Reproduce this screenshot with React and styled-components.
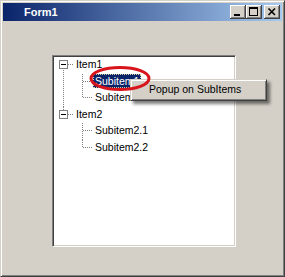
import React from "react";
import styled, { createGlobalStyle } from "styled-components";

const Global = createGlobalStyle`
  html, body { margin: 0; padding: 0; background: #d4d0c8; }
  body { width: 285px; height: 277px; overflow: hidden; }
`;

const Window = styled.div`
  position: relative;
  width: 285px;
  height: 277px;
  box-sizing: border-box;
  background: #d4d0c8;
  border: 1px solid;
  border-color: #d4d0c8 #404040 #404040 #d4d0c8;
  box-shadow: inset 1px 1px #ffffff, inset -1px -1px #808080;
  padding: 2px;
  display: flex;
  flex-direction: column;
  font-family: "Liberation Sans", Arial, sans-serif;
`;

const TitleBar = styled.div`
  height: 18px;
  display: flex;
  align-items: center;
  padding: 0 2px 0 21px;
  background: linear-gradient(to right, #0a246a, #a6caf0);
`;

const Title = styled.div`
  flex: 1;
  color: #ffffff;
  font-weight: bold;
  font-size: 11px;
  line-height: 18px;
`;

const CaptionButton = styled.div`
  width: 16px;
  height: 14px;
  box-sizing: border-box;
  background: #d4d0c8;
  box-shadow: inset -1px -1px #404040, inset 1px 1px #ffffff,
    inset -2px -2px #808080, inset 2px 2px #d4d0c8;
  display: flex;
  margin-left: ${(p) => (p.$gap ? "2px" : "0")};
  svg { display: block; }
`;

const Body = styled.div`
  flex: 1;
  padding: 34px 0 0 49px;
`;

const Tree = styled.div`
  width: 184px;
  height: 192px;
  box-sizing: border-box;
  background: #ffffff;
  border: 1px solid;
  border-color: #808080 #ffffff #ffffff #808080;
  box-shadow: inset 1px 1px #404040, inset -1px -1px #d4d0c8;
  padding: 1px;
  font-size: 10.5px;
  color: #000000;
`;

const Row = styled.div`
  height: 16.5px;
  display: flex;
  align-items: flex-start;
`;

const dotV = "repeating-linear-gradient(to bottom, #808080 0 1px, transparent 1px 2px)";
const dotH = "repeating-linear-gradient(to right, #808080 0 1px, transparent 1px 2px)";

const Cell = styled.div`
  position: relative;
  width: 19px;
  height: 100%;
  flex: none;
  &::before {
    content: "";
    display: ${(p) => (p.$v === "none" ? "none" : "block")};
    position: absolute;
    left: 9px;
    width: 1px;
    top: ${(p) => (p.$v === "bottom" ? "7px" : "0")};
    ${(p) => (p.$v === "top" ? "height: 8px;" : "bottom: 0;")}
    background: ${dotV};
  }
  &::after {
    content: "";
    display: ${(p) => (p.$h ? "block" : "none")};
    position: absolute;
    left: 10px;
    width: 9px;
    top: 7px;
    height: 1px;
    background: ${dotH};
  }
`;

const Expander = styled.div`
  position: absolute;
  left: 5px;
  top: 3px;
  width: 9px;
  height: 9px;
  box-sizing: border-box;
  border: 1px solid #808080;
  background: #ffffff;
  z-index: 1;
  &::after {
    content: "";
    position: absolute;
    left: 1px;
    top: 3px;
    width: 5px;
    height: 1px;
    background: #000000;
  }
`;

const Label = styled.div`
  height: 14px;
  line-height: 14px;
  padding: 0 2px;
  margin-left: 1px;
  white-space: nowrap;
  background: ${(p) => (p.$selected ? "#0a246a" : "transparent")};
  color: ${(p) => (p.$selected ? "#ffffff" : "#000000")};
  outline: ${(p) => (p.$selected ? "1px dotted #d8d0a0" : "none")};
  outline-offset: -1px;
`;

const Popup = styled.div`
  position: absolute;
  left: 129px;
  top: 78px;
  width: 137px;
  height: 22px;
  box-sizing: border-box;
  background: #d4d0c8;
  border: 1px solid;
  border-color: #d4d0c8 #404040 #404040 #d4d0c8;
  box-shadow: inset 1px 1px #ffffff, inset -1px -1px #808080,
    3px 3px 3px rgba(0, 0, 0, 0.5);
  padding-left: 18px;
  font-size: 10.5px;
  line-height: 18px;
  color: #000000;
  white-space: nowrap;
`;

const Annotation = styled.svg`
  position: absolute;
  left: 88px;
  top: 64px;
  overflow: visible;
`;

const rows = [
  { cells: [{ v: "bottom", h: true, exp: true }], text: "Item1" },
  { cells: [{ v: "full" }, { v: "full", h: true }], text: "Subitem1", selected: true },
  { cells: [{ v: "full" }, { v: "top", h: true }], text: "Subitem1.2" },
  { cells: [{ v: "top", h: true, exp: true }], text: "Item2" },
  { cells: [{ v: "none" }, { v: "full", h: true }], text: "Subitem2.1" },
  { cells: [{ v: "none" }, { v: "top", h: true }], text: "Subitem2.2" },
];

export default function App() {
  return (
    <>
      <Global />
      <Window>
        <TitleBar>
          <Title>Form1</Title>
          <CaptionButton>
            <svg width="16" height="14" shapeRendering="crispEdges">
              <rect x="4" y="9" width="6" height="2" fill="#000" />
            </svg>
          </CaptionButton>
          <CaptionButton>
            <svg width="16" height="14" shapeRendering="crispEdges">
              <rect x="3.5" y="2.5" width="8" height="8" fill="none" stroke="#000" />
              <rect x="3" y="3" width="9" height="1" fill="#000" />
            </svg>
          </CaptionButton>
          <CaptionButton $gap>
            <svg width="16" height="14">
              <path d="M4.5 3.5 L11 10 M11 3.5 L4.5 10" stroke="#000" strokeWidth="1.6" />
            </svg>
          </CaptionButton>
        </TitleBar>
        <Body>
          <Tree>
            {rows.map((r, i) => (
              <Row key={i}>
                {r.cells.map((c, j) => (
                  <Cell key={j} $v={c.v} $h={c.h}>
                    {c.exp && <Expander />}
                  </Cell>
                ))}
                <Label $selected={r.selected}>{r.text}</Label>
              </Row>
            ))}
          </Tree>
        </Body>
        <Popup>Popup on SubItems</Popup>
        <Annotation width="64" height="28" viewBox="0 0 64 28">
          <ellipse cx="31" cy="13.5" rx="29" ry="11" fill="none" stroke="#d8141c" strokeWidth="3" />
        </Annotation>
      </Window>
    </>
  );
}
